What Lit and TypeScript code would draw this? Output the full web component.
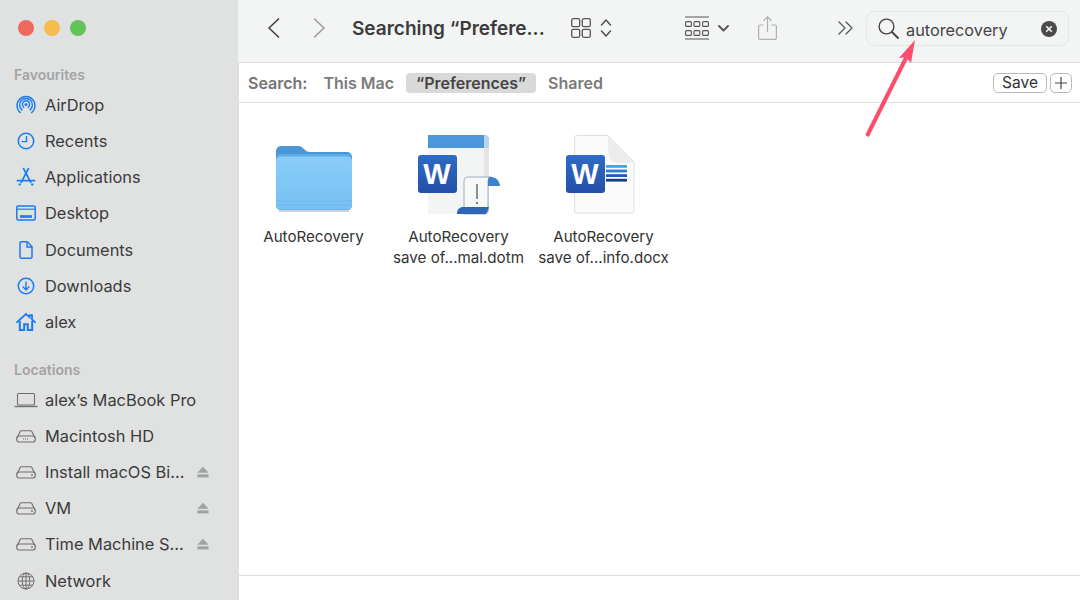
import { LitElement, html, css, svg } from "lit";
import { customElement } from "lit/decorators.js";

const B = "#1b7bf5";
const G = "#6f6f6f";
const s = (w: number, h: number, body: unknown, c = "") =>
  html`<svg class=${c} width=${w} height=${h} viewBox="0 0 ${w} ${h}" fill="none">${body}</svg>`;

const icons: Record<string, unknown> = {
  airdrop: s(20, 20, svg`<g stroke=${B} stroke-width="1.4" stroke-linecap="round">
    <path d="M4.4 17.6A9 9 0 1 1 15.6 17.6"/><path d="M6 14.9A6.4 6.4 0 1 1 14 14.9"/><path d="M7.8 12.2A3.6 3.6 0 1 1 12.2 12.2"/></g>
    <circle cx="10" cy="9.6" r="1.5" fill=${B}/>`),
  recents: s(20, 20, svg`<circle cx="10" cy="10" r="7.7" stroke=${B} stroke-width="1.5"/><path d="M10.5 5v5.6H5.6" stroke=${B} stroke-width="1.4"/>`),
  apps: s(20, 20, svg`<g stroke=${B} stroke-width="1.7" stroke-linecap="round"><path d="M7.6 1.6 14.8 15.4M12.4 1.6 5.2 15.4M1.4 13.6h17.2"/><path d="M3.4 17.4h.6M16 17.4h.6" stroke-width="2"/></g>`),
  desktop: s(20, 20, svg`<rect x=".8" y="3" width="18.4" height="14" rx="1.6" stroke=${B} stroke-width="1.5"/><path d="M1 6.2h18" stroke=${B} stroke-width="1.2"/><rect x="4" y="12.2" width="12" height="2.6" fill=${B}/>`),
  docs: s(20, 20, svg`<path d="M4 3.2A1.5 1.5 0 0 1 5.5 1.7h5.7L16 6.6v10.2a1.5 1.5 0 0 1-1.5 1.5h-9A1.5 1.5 0 0 1 4 16.8Z" stroke=${B} stroke-width="1.5"/><path d="M11 2v5h5" stroke=${B} stroke-width="1.3"/>`),
  downloads: s(20, 20, svg`<circle cx="10" cy="10" r="7.7" stroke=${B} stroke-width="1.5"/><path d="M10 5.5v8.5M6.7 10.6 10 14l3.3-3.4" stroke=${B} stroke-width="1.4"/>`),
  home: s(20, 20, svg`<path d="M1 10.2 10 2l3.6 3.3V3.2h2.4v4.3l3 2.7" stroke=${B} stroke-width="1.8" stroke-linecap="round"/><path d="M3.8 9v8.9h4.4v-5.6h3.6v5.6h4.4V9" stroke=${B} stroke-width="2"/>`),
  laptop: s(24, 20, svg`<rect x="3.5" y="3.5" width="17" height="11.5" rx="1.2" stroke=${G} stroke-width="1.1"/><path d="M.5 16.5h23" stroke=${G} stroke-width="1.4"/>`, "lap"),
  hd: s(20, 20, svg`<path d="M1.2 11.5 4.2 5.6a1.5 1.5 0 0 1 1.3-.8h9a1.5 1.5 0 0 1 1.3.8l3 5.9" stroke=${G} stroke-width="1.1"/><rect x=".8" y="10" width="18.4" height="6" rx="2.2" stroke=${G} stroke-width="1.2"/><path d="M7 13h6" stroke=${G} stroke-width="1" stroke-dasharray="1 1"/>`),
  drive: s(20, 20, svg`<path d="M1.2 11.5 4.2 5.6a1.5 1.5 0 0 1 1.3-.8h9a1.5 1.5 0 0 1 1.3.8l3 5.9" stroke=${G} stroke-width="1.1"/><rect x=".8" y="10" width="18.4" height="6" rx="2.2" stroke=${G} stroke-width="1.2"/><circle cx="16" cy="13" r=".9" fill=${G}/>`),
  globe: s(20, 20, svg`<g stroke=${G} stroke-width="1"><circle cx="10" cy="10" r="8"/><ellipse cx="10" cy="10" rx="3.8" ry="8"/><path d="M10 2v16M2 10h16M3.2 5.8h13.6M3.2 14.2h13.6"/></g>`),
};

const eject = s(12, 12, svg`<path d="M6 .8 11.6 6.8H.4Z" fill="#a0a1a1"/><rect x=".4" y="8.4" width="11.2" height="3" fill="#a0a1a1"/>`);

const favs = [["airdrop", "AirDrop"], ["recents", "Recents"], ["apps", "Applications"], ["desktop", "Desktop"], ["docs", "Documents"], ["downloads", "Downloads"], ["home", "alex"]];
const locs: [string, string, boolean][] = [["laptop", "alex’s MacBook Pro", false], ["hd", "Macintosh HD", false], ["drive", "Install macOS Bi...", true], ["drive", "VM", true], ["drive", "Time Machine S...", true], ["globe", "Network", false]];

const folderIcon = html`<svg width="80" height="80" viewBox="0 0 80 80" fill="none">
  <defs><linearGradient id="fg" x1="0" y1="0" x2="0" y2="1"><stop offset="0" stop-color="#88cdf8"/><stop offset="1" stop-color="#78c0f3"/></linearGradient></defs>
  <path d="M2 16a5 5 0 0 1 5-5h17c3 0 4 1 6 3s3 3 6 3h37a5 5 0 0 1 5 5v10H2Z" fill="#4b97d6"/>
  <rect x="2" y="19" width="76" height="56" rx="4.5" fill="#5ea9e4"/>
  <rect x="2" y="21.5" width="76" height="53" rx="4.5" fill="url(#fg)"/>
  <path d="M2 66h76M2 70h76" stroke="#68b1ea" stroke-width=".7"/>
  <path d="M5 76h70" stroke="#9aa7b2" stroke-width="1"/>
</svg>`;

const wBox = html`<span class="wbox">W</span>`;

const dotmIcon = html`<div class="ic dotm">
  <svg width="82" height="80" viewBox="0 0 82 80" fill="none">
    <path d="M10 0h58l3 3v73l-3 3H12l-2-2Z" fill="#e3e4e4"/>
    <path d="M10 13h56v66H12l-2-2Z" fill="#f3f4f4"/>
    <path d="M10 0h58l3 3v10H10Z" fill="#4a97dc"/>
    <path d="M66 0h2l3 3v10h-5Z" fill="#bcd3ea"/>
    <path d="M46 46c0-3 2-4 4-4h23c-2 0-3 2-3 5v27c0 3-1 5-3 5H46Z" fill="#f7f8f8" stroke="#8fa9c4" stroke-width=".9"/>
    <path d="M72 42c5 0 9 2 10 9h-12v-4c0-3 0-5 2-5Z" fill="#3e82c9"/>
    <path d="M39 79c0-5 3-7 6-7h26c-1 3-2 7-4 7Z" fill="#2f66b3"/>
    <path d="M59 49v15" stroke="#555" stroke-width="1.3"/><circle cx="59" cy="68" r="1" fill="#555"/>
  </svg>${wBox}
</div>`;

const docxIcon = html`<div class="ic docx">
  <svg width="76" height="80" viewBox="0 0 76 80" fill="none">
    <path d="M8.5 2A2 2 0 0 1 10.5.5h31.5L68 27v49a2 2 0 0 1-2 2H10.5a2 2 0 0 1-2-2Z" fill="#fbfbfb" stroke="#dedede"/>
    <path d="M42 .5c0 10 0 24 4 26 5 2 16 1 22 1C60 19 50 9 42 .5Z" fill="#ececec"/>
    <rect x="40" y="30" width="21" height="2.8" fill="#41a5ee"/><rect x="40" y="34.6" width="21" height="2.8" fill="#2b7cd3"/>
    <rect x="40" y="39.2" width="21" height="2.8" fill="#185abd"/><rect x="40" y="43.8" width="21" height="2.8" fill="#103f91"/>
  </svg>${wBox}
</div>`;

@customElement("app-root")
export class AppRoot extends LitElement {
  static styles = css`
    :host { display: block; width: 1080px; height: 600px; overflow: hidden; font-family: Inter, "Liberation Sans", sans-serif; color: #3a3a3a; position: relative; background: #fff; }
    .win { display: grid; grid-template-columns: 238px 1fr; height: 600px; }
    .side { background: #e0e1e1; padding: 20px 0 0 14px; border-right: 1px solid #dedede; box-sizing: border-box; width: 239px; overflow: hidden; }
    .lights { display: flex; gap: 10px; padding-left: 4px; height: 16px; }
    .lights i { width: 16px; height: 16px; border-radius: 50%; display: block; }
    .h { font-size: 14px; font-weight: 600; color: #a3a4a4; line-height: 18px; }
    .h.fav { margin-top: 30px; }
    .h.loc { margin-top: 21px; }
    .list { margin-top: 3px; }
    .row { display: flex; align-items: center; height: 36.14px; font-size: 16.4px; white-space: nowrap; color: #3b3b3b; }
    .ri { width: 31px; flex: none; display: flex; align-items: center; padding-left: 2px; box-sizing: border-box; }
    .lap { margin-left: -2px; }
    .ej { margin-left: auto; margin-right: 29px; display: flex; }
    .main { display: flex; flex-direction: column; min-width: 0; height: 600px; }
    .tb { height: 63px; box-sizing: border-box; background: #f3f4f4; border-bottom: 1px solid #dcdddd; display: flex; align-items: center; flex: none; padding-left: 29px; }
    .tb > * { flex: none; }
    .title { font-size: 19px; font-weight: 600; color: #3c3c3c; margin-left: 26px; width: 192px; white-space: nowrap; margin-top: -6px; }
    .up { margin-top: -6px; }
    .search { margin-left: 13px; width: 203px; height: 35px; box-sizing: border-box; border: 1px solid #e6e7e7; border-radius: 8px; display: flex; align-items: center; padding-left: 11px; margin-top: -6px; font-size: 16.3px; color: #444; }
    .search span { margin-left: 7px; flex: 1; margin-top: 3px; }
    .clear { width: 16px; height: 16px; margin-right: 11px; margin-top: 1px; }
    .scope { height: 40px; box-sizing: border-box; border-bottom: 1px solid #dfdfdf; display: flex; align-items: center; padding-left: 10px; font-size: 16px; font-weight: 600; color: #7a7a7a; flex: none; }
    .scope .l { color: #747474; margin-right: 16px; }
    .pill { background: #d9d9d9; color: #444; padding: 0 10px; height: 20px; line-height: 20px; border-radius: 4px; margin: 0 12px; }
    .btn { border: 1px solid #b9b9b9; border-radius: 5px; height: 20px; box-sizing: border-box; display: flex; align-items: center; justify-content: center; font-size: 15.5px; font-weight: 400; color: #333; background: #fff; }
    .save { margin-left: auto; width: 54px; }
    .plus { width: 22px; margin: 0 8px 0 3px; }
    .grid { flex: 1; display: flex; padding: 32px 0 0 3px; align-items: flex-start; }
    .item { width: 145px; display: flex; flex-direction: column; align-items: center; text-align: center; font-size: 15.15px; line-height: 21px; color: #333; white-space: nowrap; }
    .iconbox { height: 80px; margin-bottom: 11px; display: flex; }
    .ic { position: relative; width: 82px; height: 80px; }
    .ic.docx { width: 76px; }
    .wbox { position: absolute; left: 0; top: 20px; width: 39px; height: 38px; border-radius: 3px; background: linear-gradient(#2e6bc6, #2450a8); color: #fff; font: 700 29px/38px "Liberation Sans", sans-serif; text-align: center; }
    .foot { height: 25px; border-top: 1px solid #dedede; flex: none; box-sizing: border-box; }
    .arrow { position: absolute; left: 855px; top: 30px; }
  `;

  render() {
    return html`<div class="win">
      <aside class="side">
        <div class="lights"><i style="background:#ee6a5f"></i><i style="background:#f5bd4f"></i><i style="background:#61c454"></i></div>
        <div class="h fav">Favourites</div>
        <div class="list">${favs.map(([i, t]) => html`<div class="row"><span class="ri">${icons[i]}</span>${t}</div>`)}</div>
        <div class="h loc">Locations</div>
        <div class="list">${locs.map(([i, t, e]) => html`<div class="row"><span class="ri">${icons[i]}</span>${t}${e ? html`<span class="ej">${eject}</span>` : ""}</div>`)}</div>
      </aside>
      <section class="main">
        <div class="tb">
          ${s(13, 22, svg`<path d="M11.5 2 2 11l9.5 9" stroke="#444" stroke-width="1.7" stroke-linecap="round" stroke-linejoin="round"/>`, "up")}
          <span style="width:33px"></span>
          ${s(13, 22, svg`<path d="M1.5 2 11 11l-9.5 9" stroke="#9c9c9c" stroke-width="1.6" stroke-linecap="round" stroke-linejoin="round"/>`, "up")}
          <div class="title">Searching “Prefere...</div>
          <span style="width:27px"></span>
          ${s(20, 20, svg`<g stroke="#555" stroke-width="1.3"><rect x=".7" y=".7" width="8" height="8" rx="1.5"/><rect x="11.3" y=".7" width="8" height="8" rx="1.5"/><rect x=".7" y="11.3" width="8" height="8" rx="1.5"/><rect x="11.3" y="11.3" width="8" height="8" rx="1.5"/></g>`, "up")}
          <span style="width:9px"></span>
          ${s(12, 20, svg`<path d="M1.5 7 6 2l4.5 5M1.5 13 6 18l4.5-5" stroke="#555" stroke-width="1.6" stroke-linecap="round" stroke-linejoin="round"/>`, "up")}
          <span style="width:73px"></span>
          ${s(24, 24, svg`<g stroke="#555"><path d="M0 1h24M0 23h24" stroke-width="1.2"/><g stroke-width="1.1"><rect x=".6" y="5.6" width="5.8" height="4.8" rx="1"/><rect x="9" y="5.6" width="5.8" height="4.8" rx="1"/><rect x="17.6" y="5.6" width="5.8" height="4.8" rx="1"/><rect x=".6" y="14.6" width="5.8" height="4.8" rx="1"/><rect x="9" y="14.6" width="5.8" height="4.8" rx="1"/><rect x="17.6" y="14.6" width="5.8" height="4.8" rx="1"/></g></g>`, "up")}
          <span style="width:9px"></span>
          ${s(11, 7, svg`<path d="M1 1l4.5 4.5L10 1" stroke="#555" stroke-width="1.8" stroke-linecap="round" stroke-linejoin="round"/>`, "up")}
          <span style="width:29px"></span>
          ${s(19, 24, svg`<g stroke="#b0b0b0" stroke-width="1.2"><path d="M5.5 9H2a1.4 1.4 0 0 0-1.4 1.4v11.6A1.4 1.4 0 0 0 2 23.4h15a1.4 1.4 0 0 0 1.4-1.4V10.4A1.4 1.4 0 0 0 17 9h-3.5"/><path d="M9.5 16V1M5.5 4.8 9.5.9l4 3.9"/></g>`, "up")}
          <span style="width:61px"></span>
          ${s(15, 14, svg`<path d="M1 1l6 6-6 6M8 1l6 6-6 6" stroke="#555" stroke-width="1.3" stroke-linecap="round" stroke-linejoin="round"/>`, "up")}
          <div class="search">
            ${s(21, 21, svg`<circle cx="8.5" cy="8.5" r="7.4" stroke="#444" stroke-width="1.4"/><path d="m14 14 6 6" stroke="#444" stroke-width="1.8" stroke-linecap="round"/>`)}
            <span>autorecovery</span>
            <div class="clear">${s(16, 16, svg`<circle cx="8" cy="8" r="8" fill="#4a4a4a"/><path d="m5.2 5.2 5.6 5.6m0-5.6-5.6 5.6" stroke="#f3f4f4" stroke-width="1.6"/>`)}</div>
          </div>
        </div>
        <div class="scope">
          <span class="l">Search:</span><span>This Mac</span><span class="pill">“Preferences”</span><span>Shared</span>
          <span class="btn save">Save</span>
          <span class="btn plus">${s(12, 12, svg`<path d="M6 0v12M0 6h12" stroke="#444" stroke-width="1.2"/>`)}</span>
        </div>
        <div class="grid">
          <div class="item"><div class="iconbox">${folderIcon}</div>AutoRecovery</div>
          <div class="item"><div class="iconbox">${dotmIcon}</div>AutoRecovery<br />save of...mal.dotm</div>
          <div class="item"><div class="iconbox">${docxIcon}</div>AutoRecovery<br />save of...info.docx</div>
        </div>
        <div class="foot"></div>
      </section>
    </div>
    <svg class="arrow" width="70" height="112" viewBox="0 0 70 112" fill="none">
      <path d="M12 106 52 26" stroke="#fb4d6d" stroke-width="4"/>
      <path d="M60 10 56 33 51 27 44 28Z" fill="#fb4d6d"/>
    </svg>`;
  }
}
